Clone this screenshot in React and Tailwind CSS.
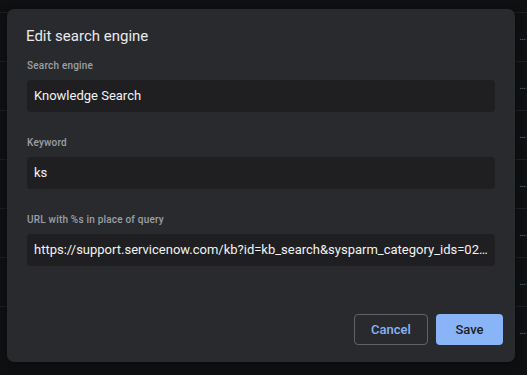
const FIELDS = [
  { label: "Search engine", value: "Knowledge Search" },
  { label: "Keyword", value: "ks" },
  {
    label: "URL with %s in place of query",
    value: "https://support.servicenow.com/kb?id=kb_search&sysparm_category_ids=0223f0a2db1a9c50b6d6e9c1ca9619e4&q=%s",
  },
];

function Field({ label, value }) {
  return (
    <div className="flex flex-col">
      <label className="text-[10px] leading-[14px] font-medium tracking-[0.2px] text-[#9aa0a6]">{label}</label>
      <div className="mt-[7px] h-8 rounded-[4px] bg-[#1f1f22] px-[7px] flex items-center">
        <span className="block w-full truncate text-[13px] text-[#f1f3f4]">{value}</span>
      </div>
    </div>
  );
}

export default function App() {
  return (
    <div
      className="relative w-[527px] h-[375px] overflow-hidden bg-[#0f1012]"
      style={{ fontFamily: "Roboto, 'Liberation Sans', sans-serif" }}
    >
      {/* page behind the dialog */}
      <div className="flex flex-col pt-[12px]">
        {Array.from({ length: 7 }).map((_, i) => (
          <div key={i} className="h-[49px] border-t border-[#1d1e21] flex items-center justify-end pr-px">
            <span className="text-[10px] leading-none text-[#6b6f74]">…</span>
          </div>
        ))}
      </div>

      {/* dialog */}
      <div className="absolute left-[7px] top-[9px] w-[508px] h-[353px] rounded-[7px] bg-[#292a2d] flex flex-col shadow-[0_2px_8px_rgba(0,0,0,0.4)]">
        <div className="px-5 pt-[17px]">
          <h2 className="text-[15px] leading-[20px] text-[#e8eaed] -ml-px">Edit search engine</h2>
          <div className="mt-[13px] flex flex-col gap-[24px]">
            {FIELDS.map((f) => (
              <Field key={f.label} {...f} />
            ))}
          </div>
        </div>
        <div className="mt-auto flex justify-end gap-2 pr-3 pb-[17px]">
          <button className="w-[74px] h-[31px] rounded-[4px] border border-[#5f6368] text-[13px] font-medium text-[#8ab4f8]">
            Cancel
          </button>
          <button className="w-[67px] h-[31px] rounded-[4px] bg-[#8ab4f8] text-[13px] font-medium text-[#202124]">
            Save
          </button>
        </div>
      </div>
    </div>
  );
}
